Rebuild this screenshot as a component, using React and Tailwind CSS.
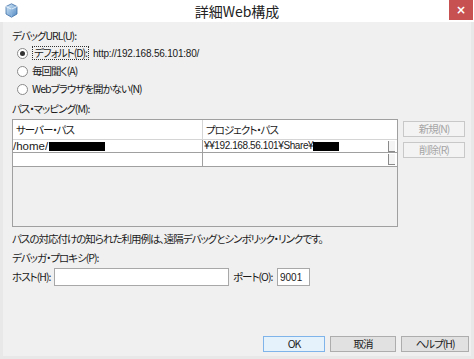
import React from "react";

const jp = "font-['Noto_Sans_CJK_JP',sans-serif] [font-feature-settings:'palt']";

function Radio({ checked }) {
  return (
    <span className="relative inline-flex h-[11px] w-[11px] shrink-0 items-center justify-center rounded-full border border-[#8a8a8a] bg-white mr-[4px]">
      {checked && <span className="h-[5px] w-[5px] rounded-full bg-[#333]" />}
    </span>
  );
}

function SmallBtn({ children }) {
  return (
    <div className="flex h-[16px] w-[62px] items-center justify-center border border-[#c8c8c8] bg-[#f3f3f3] text-[#a5a5a5]">
      {children}
    </div>
  );
}

function Btn({ children, w, def }) {
  return (
    <div
      className={
        "flex h-[16px] items-center justify-center border text-[#222] " +
        (def ? "border-[#7eb4ea] bg-[#e5f1fb]" : "border-[#adadad] bg-[#e1e1e1]")
      }
      style={{ width: w }}
    >
      {children}
    </div>
  );
}

export default function App() {
  return (
    <div className={"flex h-[359px] w-[474px] flex-col overflow-hidden bg-white text-[#1a1a1a] " + jp}>
      {/* title bar */}
      <div className="relative flex h-[22px] items-center justify-center bg-white">
        <svg className="absolute left-[5px] top-[3px]" width="13" height="15" viewBox="0 0 13 15">
          <defs>
            <linearGradient id="g1" x1="0" y1="0" x2="1" y2="1">
              <stop offset="0" stopColor="#d9ecfa" />
              <stop offset="1" stopColor="#4f87c2" />
            </linearGradient>
          </defs>
          <path d="M6.5 0.8 L12 3.5 L12 11 L6.5 14.2 L1 11 L1 3.5 Z" fill="url(#g1)" stroke="#3d6ea6" strokeWidth="0.8" />
          <path d="M1 3.5 L6.5 6.2 L12 3.5" fill="none" stroke="#f4faff" strokeWidth="0.8" />
          <path d="M6.5 6.2 L6.5 14" stroke="#8cb5dd" strokeWidth="0.8" />
        </svg>
        <span className="text-[14px] text-[#222]">詳細Web構成</span>
        <div className="absolute right-[1px] top-0 flex h-[20px] w-[24px] items-center justify-center bg-[#c75050] text-[12px] font-bold text-white font-['DejaVu_Sans',sans-serif]">
          ×
        </div>
      </div>

      {/* body */}
      <div className="flex flex-1 flex-col border-x-[3px] border-b-[3px] border-[#e8e8e8] bg-[#f0f0f0] pl-[9px] text-[10.5px] tracking-[-1px] whitespace-nowrap">
        <div className="mt-[6px] flex h-[16px] items-center">デバッグURL(U):</div>
        <div className="ml-[5px] flex h-[18px] items-center">
          <Radio checked />
          <span className="border border-dotted border-[#333] px-[1px] leading-[12px]">デフォルト(D):</span>
          <span className="ml-[4px] font-['Liberation_Sans',sans-serif] text-[10px] tracking-[-0.2px]">http://192.168.56.101:80/</span>
        </div>
        <div className="ml-[5px] flex h-[18px] items-center">
          <Radio />
          <span>毎回聞く(A)</span>
        </div>
        <div className="ml-[5px] flex h-[18px] items-center">
          <Radio />
          <span>Webブラウザを開かない(N)</span>
        </div>
        <div className="mt-[2px] flex h-[18px] items-center">パス・マッピング(M):</div>

        <div className="mt-[1px] flex">
          <div className="flex h-[108px] w-[386px] flex-col border border-[#a0a0a0] bg-[#f0f0f0]">
            <div className="flex h-[20px] border-b border-[#d5d5d5] bg-white">
              <div className="flex w-[190px] items-center border-r border-[#d5d5d5] pl-[3px]">サーバー・パス</div>
              <div className="flex flex-1 items-center pl-[3px]">プロジェクト・パス</div>
            </div>
            <div className="flex h-[13px] border-b border-[#a0a0a0] bg-white leading-[12px]">
              <div className="flex w-[190px] items-center border-r border-[#a0a0a0]">
                <span className="font-['Liberation_Sans',sans-serif] text-[11.5px] tracking-[0px]">/home/</span>
                <span className="ml-[1px] h-[9px] w-[56px] bg-black" />
              </div>
              <div className="flex flex-1 items-center pl-[1px]">
                <span className="font-['Liberation_Sans',sans-serif] text-[10px] tracking-[-0.4px]">¥¥192.168.56.101¥Share¥</span>
                <span className="h-[9px] w-[26px] bg-black" />
                <span className="ml-auto mr-[2px] h-[11px] w-[7px] border-b border-l border-[#8a8a8a] bg-[#f4f4f4]" />
              </div>
            </div>
            <div className="flex h-[14px] border-b border-[#a0a0a0] bg-white">
              <div className="w-[190px] border-r border-[#a0a0a0]" />
              <div className="flex flex-1 items-center justify-end">
                <span className="mr-[2px] h-[11px] w-[7px] border-b border-l border-[#8a8a8a] bg-[#f4f4f4]" />
              </div>
            </div>
          </div>
          <div className="ml-[5px] flex flex-col gap-[5px] pt-[2px]">
            <SmallBtn>新規(N)</SmallBtn>
            <SmallBtn>削除(R)</SmallBtn>
          </div>
        </div>

        <div className="mt-[4px] flex h-[16px] items-center">パスの対応付けの知られた利用例は、遠隔デバッグとシンボリック・リンクです。</div>
        <div className="mt-[3px] flex h-[16px] items-center">デバッガ・プロキシ(P):</div>
        <div className="mt-[2px] flex h-[18px] items-center">
          <span className="w-[42px] shrink-0">ホスト(H):</span>
          <div className="h-[18px] w-[175px] shrink-0 border border-[#a8a8a8] bg-white" />
          <span className="ml-[4px] w-[44px] shrink-0">ポート(O):</span>
          <div className="flex h-[18px] w-[33px] shrink-0 items-center border border-[#a8a8a8] bg-white pl-[2px] font-['Liberation_Sans',sans-serif] text-[10px] tracking-[0px]">9001</div>
        </div>

        <div className="mt-auto mb-[4px] flex justify-end gap-[5px] pr-[2px]">
          <Btn w="62px" def>OK</Btn>
          <Btn w="66px">取消</Btn>
          <Btn w="68px">ヘルプ(H)</Btn>
        </div>
      </div>
    </div>
  );
}
